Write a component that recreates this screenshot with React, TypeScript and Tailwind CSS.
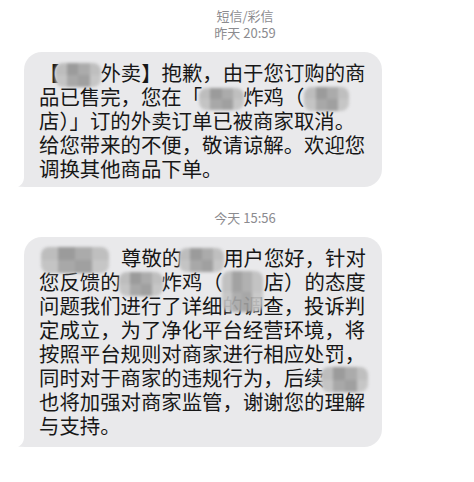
import type { ReactNode } from 'react'

// mosaic-style redaction block
const Mosaic = ({ className }: { className: string }) => (
  <span className={`absolute blur-[1.5px] rounded-[8px] overflow-hidden flex flex-col ${className}`}>
    <span className="flex flex-1">
      <span className="flex-1 bg-[#bdbdbd]" />
      <span className="flex-1 bg-[#9b9b9b]" />
      <span className="flex-1 bg-[#ababab]" />
      <span className="flex-1 bg-[#bfbfbf]" />
    </span>
    <span className="flex flex-1">
      <span className="flex-1 bg-[#c4c4c4]" />
      <span className="flex-1 bg-[#a8a8a8]" />
      <span className="flex-1 bg-[#a0a0a0]" />
      <span className="flex-1 bg-[#c6c6c6]" />
    </span>
  </span>
)

const Gap = ({ w, children }: { w: string; children?: ReactNode }) => (
  <span className={`relative inline-block align-middle h-[20px] ${w}`}>{children}</span>
)

const Line = ({ children }: { children: ReactNode }) => (
  <div className="whitespace-nowrap h-[24px]">{children}</div>
)

const Bubble = ({ children, className }: { children: ReactNode; className: string }) => (
  <div className={`relative ml-[24px] w-[358px] bg-[#e9e9eb] rounded-[18px] pl-[15px] pr-[17px] ${className}`}>
    <svg className="absolute left-[-6px] bottom-0" width="24" height="20" viewBox="0 0 24 20">
      <path d="M6 0 H24 V20 H11 C7 20 3 19.2 0 20 C3.5 18 6 15 6 10 Z" fill="#e9e9eb" />
    </svg>
    <div className="relative text-[20.4px] leading-[24px] text-[#171717]">{children}</div>
  </div>
)

const Stamp = ({ children }: { children: ReactNode }) => (
  <div className="pl-[16px] text-center text-[13px] leading-[17px] text-[#8b8b8f]">{children}</div>
)

export default function App() {
  return (
    <div
      className="w-[474px] h-[482px] bg-white overflow-hidden pt-[7px]"
      style={{ fontFamily: '"Noto Sans CJK SC", "Noto Sans", sans-serif' }}
    >
      <Stamp>短信/彩信</Stamp>
      <Stamp>昨天 20:59</Stamp>

      <Bubble className="mt-[11px] pt-[8px] pb-[7px]">
        <Line>
          【<Gap w="w-[41px]"><Mosaic className="left-[-4px] right-[-1px] top-[-2px] bottom-[-2px]" /></Gap>外卖】抱歉，由于您订购的商
        </Line>
        <Line>
          品已售完，您在「<Gap w="w-[41px]"><Mosaic className="left-[-3px] right-[-1px] top-[-1px] bottom-[-1px]" /></Gap>炸鸡（<Gap w="w-[41px]"><Mosaic className="left-[0px] right-[-4px] top-[-2px] bottom-[-2px]" /></Gap>
        </Line>
        <Line>店）」订的外卖订单已被商家取消。</Line>
        <Line>给您带来的不便，敬请谅解。欢迎您</Line>
        <Line>调换其他商品下单。</Line>
      </Bubble>

      <div className="mt-[22px]">
        <Stamp>今天 15:56</Stamp>
      </div>

      <Bubble className="mt-[11px] pt-[8px] pb-[10px]">
        <Line>
          <Gap w="w-[82px]"><Mosaic className="left-[2px] right-[12px] top-[-3px] bottom-[-3px]" /></Gap>尊敬的<Gap w="w-[41px]"><Mosaic className="left-[-3px] right-[-1px] top-[-2px] bottom-[-2px]" /></Gap>用户您好，针对
        </Line>
        <Line>
          您反馈的<Gap w="w-[41px]"><Mosaic className="left-[-2px] right-[-1px] top-[-2px] bottom-[-2px]" /></Gap>炸鸡（<Gap w="w-[41px]"><Mosaic className="left-[-1px] right-[1px] top-[-3px] bottom-[-18px] opacity-90" /></Gap>店）的态度
        </Line>
        <Line>问题我们进行了详细的调查，投诉判</Line>
        <Line>定成立，为了净化平台经营环境，将</Line>
        <Line>按照平台规则对商家进行相应处罚，</Line>
        <Line>
          同时对于商家的违规行为，后续<Gap w="w-[41px]"><Mosaic className="left-[-3px] right-[-3px] top-[-3px] bottom-[-2px]" /></Gap>
        </Line>
        <Line>也将加强对商家监管，谢谢您的理解</Line>
        <Line>与支持。</Line>
      </Bubble>
    </div>
  )
}
